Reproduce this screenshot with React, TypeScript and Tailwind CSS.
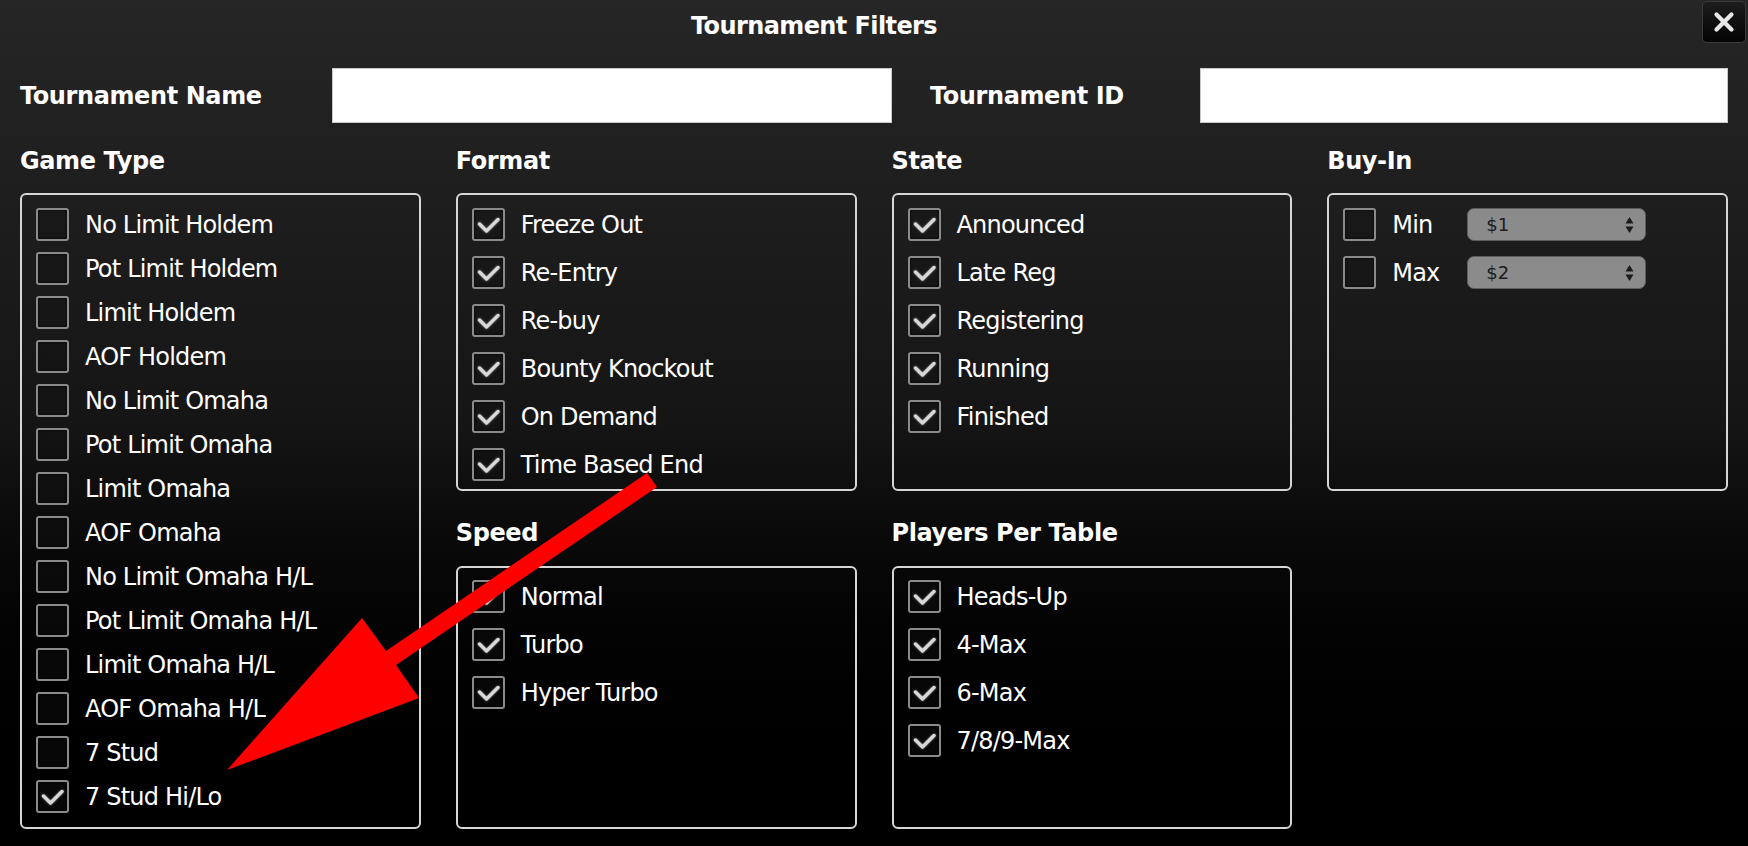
import { X } from "lucide-react";

const FONT = { fontFamily: '"DejaVu Sans", Verdana, sans-serif' };

const GAME_TYPES: [string, boolean][] = [
  ["No Limit Holdem", false],
  ["Pot Limit Holdem", false],
  ["Limit Holdem", false],
  ["AOF Holdem", false],
  ["No Limit Omaha", false],
  ["Pot Limit Omaha", false],
  ["Limit Omaha", false],
  ["AOF Omaha", false],
  ["No Limit Omaha H/L", false],
  ["Pot Limit Omaha H/L", false],
  ["Limit Omaha H/L", false],
  ["AOF Omaha H/L", false],
  ["7 Stud", false],
  ["7 Stud Hi/Lo", true],
];

const FORMATS = ["Freeze Out", "Re-Entry", "Re-buy", "Bounty Knockout", "On Demand", "Time Based End"];
const STATES = ["Announced", "Late Reg", "Registering", "Running", "Finished"];
const SPEEDS = ["Normal", "Turbo", "Hyper Turbo"];
const PLAYERS = ["Heads-Up", "4-Max", "6-Max", "7/8/9-Max"];

function Checkbox({ checked }: { checked: boolean }) {
  return (
    <span className="flex h-[33px] w-[33px] shrink-0 items-center justify-center rounded-[3px] border-2 border-[#8a8a8a] bg-[#111]/40 shadow-[inset_0_0_3px_rgba(0,0,0,0.8)]">
      {checked && (
        <svg width="29" height="29" viewBox="0 0 29 29" className="drop-shadow-[0_0_1px_rgba(255,255,255,0.5)]">
          <polyline
            points="5.5,14 12.5,21 24,9.5"
            fill="none"
            stroke="#d8d8d8"
            strokeWidth="3.4"
            strokeLinecap="round"
            strokeLinejoin="round"
          />
        </svg>
      )}
    </span>
  );
}

function Row({ label, checked }: { label: string; checked: boolean }) {
  return (
    <div className="flex h-[33px] items-center gap-[16px]">
      <Checkbox checked={checked} />
      <span className="text-[24px] leading-none tracking-[-0.8px] text-white">{label}</span>
    </div>
  );
}

function Heading({ children }: { children: string }) {
  return (
    <div className="h-[36px] text-[24px] font-bold leading-[36px] tracking-[-0.4px] text-white">{children}</div>
  );
}

function Select({ value }: { value: string }) {
  return (
    <div className="flex h-[33px] w-[179px] items-center justify-between rounded-[7px] border border-[#5e5e5e] bg-[#8b8b8b] pl-[18px] pr-[11px]">
      <span className="text-[18px] leading-none text-[#1c1c1c]">{value}</span>
      <svg width="9" height="18" viewBox="0 0 9 18">
        <polygon points="4.5,1 8.5,7.5 0.5,7.5" fill="#1c1c1c" />
        <polygon points="4.5,17 8.5,10.5 0.5,10.5" fill="#1c1c1c" />
      </svg>
    </div>
  );
}

export default function App() {
  return (
    <div
      className="relative h-[846px] w-[1748px] overflow-hidden bg-gradient-to-b from-[#262626] via-[#151515] to-[#000] text-white"
      style={FONT}
    >
      {/* title bar */}
      <div className="flex items-start">
        <div className="w-[1628px] pt-[9px] text-center text-[24px] font-bold leading-[34px] tracking-[-0.6px]">
          Tournament Filters
        </div>
        <button className="ml-auto mr-[2px] mt-[1px] flex h-[42px] w-[44px] items-center justify-center rounded-[5px] border border-[#3a3a3a] bg-gradient-to-b from-[#1d1d1d] to-[#050505]">
          <X className="h-[30px] w-[30px] text-[#e8e8e8]" strokeWidth={3.4} />
        </button>
      </div>

      {/* name / id */}
      <div className="mt-[25px] flex h-[55px] items-center px-[20px]">
        <div className="w-[312px] text-[24px] font-bold tracking-[-0.4px]">Tournament Name</div>
        <input className="h-[55px] w-[560px] border border-[#c8c8c8] bg-white outline-none" />
        <div className="ml-[38px] w-[270px] text-[24px] font-bold tracking-[-0.4px]">Tournament ID</div>
        <input className="h-[55px] w-[528px] border border-[#c8c8c8] bg-white outline-none" />
      </div>

      {/* filter columns */}
      <div className="mt-[20px] flex gap-[35px] px-[20px]">
        <div className="w-[401px]">
          <Heading>Game Type</Heading>
          <div className="mt-[14px] flex h-[636px] flex-col gap-[11px] rounded-[6px] border-2 border-[#d6d6d6] px-[14px] pt-[13px]">
            {GAME_TYPES.map(([g, c]) => (
              <Row key={g} label={g} checked={c} />
            ))}
          </div>
        </div>

        <div className="w-[401px]">
          <Heading>Format</Heading>
          <div className="mt-[14px] flex h-[298px] flex-col gap-[15px] rounded-[6px] border-2 border-[#d6d6d6] px-[14px] pt-[13px]">
            {FORMATS.map((f) => (
              <Row key={f} label={f} checked />
            ))}
          </div>
          <div className="mt-[24px]">
            <Heading>Speed</Heading>
          </div>
          <div className="mt-[15px] flex h-[263px] flex-col gap-[15px] rounded-[6px] border-2 border-[#d6d6d6] px-[14px] pt-[12px]">
            {SPEEDS.map((s) => (
              <Row key={s} label={s} checked />
            ))}
          </div>
        </div>

        <div className="w-[401px]">
          <Heading>State</Heading>
          <div className="mt-[14px] flex h-[298px] flex-col gap-[15px] rounded-[6px] border-2 border-[#d6d6d6] px-[14px] pt-[13px]">
            {STATES.map((s) => (
              <Row key={s} label={s} checked />
            ))}
          </div>
          <div className="mt-[24px]">
            <Heading>Players Per Table</Heading>
          </div>
          <div className="mt-[15px] flex h-[263px] flex-col gap-[15px] rounded-[6px] border-2 border-[#d6d6d6] px-[14px] pt-[12px]">
            {PLAYERS.map((p) => (
              <Row key={p} label={p} checked />
            ))}
          </div>
        </div>

        <div className="w-[401px]">
          <Heading>Buy-In</Heading>
          <div className="mt-[14px] flex h-[298px] flex-col gap-[15px] rounded-[6px] border-2 border-[#d6d6d6] px-[14px] pt-[13px]">
            <div className="flex h-[33px] items-center">
              <Checkbox checked={false} />
              <span className="ml-[16px] w-[75px] text-[24px] leading-none tracking-[-0.8px]">Min</span>
              <Select value="$1" />
            </div>
            <div className="flex h-[33px] items-center">
              <Checkbox checked={false} />
              <span className="ml-[16px] w-[75px] text-[24px] leading-none tracking-[-0.8px]">Max</span>
              <Select value="$2" />
            </div>
          </div>
        </div>
      </div>

      {/* red annotation arrow */}
      <svg className="pointer-events-none absolute left-0 top-0" width="1748" height="846" viewBox="0 0 1748 846">
        <polygon
          points="647,473 657,487 396,665 419,698 227,770 362,618 386,651"
          fill="#ff0000"
        />
      </svg>
    </div>
  );
}
